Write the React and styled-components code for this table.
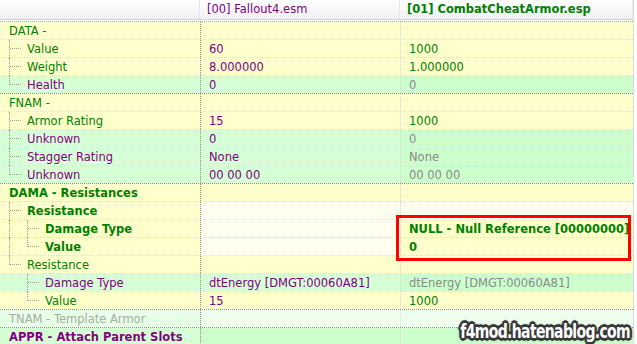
import React from 'react'
import styled, { createGlobalStyle } from 'styled-components'

const GlobalStyle = createGlobalStyle`
  body {
    margin: 0;
    background: #fff;
    font-family: "DejaVu Sans", Verdana, sans-serif;
  }
`

const G = '#008000'
const P = '#800080'
const GR = '#8a8a8a'
const LG = '#a7aca7'
const Y = '#ffffcc'
const Y2 = '#fffff0'
const GN = '#d6ffd6'
const GN2 = '#ccffcc'
const T1 = '#e6ffe6'
const T2 = '#eeffee'

const Frame = styled.div`
  position: relative;
  width: 637px;
  height: 344px;
  overflow: hidden;
  background: #fff;
`

const Table = styled.div`
  width: 633px;
  border-right: 1px solid #dcdcdc;
  font-size: 11.5px;
`

const Header = styled.div`
  display: grid;
  grid-template-columns: 200px 200px 1fr;
  height: 19px;
  border-bottom: 1px solid #d2d2d2;
  background: linear-gradient(#ffffff, #f0f0f2);
`

const HeadCell = styled.div`
  padding-left: ${({ $pad }) => $pad}px;
  line-height: 19px;
  color: ${({ $color }) => $color};
  font-weight: ${({ $bold }) => ($bold ? 700 : 400)};
  border-right: 1px solid #e6e6e6;
  white-space: nowrap;
`

const Body = styled.div`
  margin-top: 1px;
  border-top: 1px dotted #86b886;
`

const Row = styled.div`
  display: grid;
  grid-template-columns: 200px 200px 1fr;
  height: 18px;
  box-sizing: border-box;
  border-bottom: 1px dotted ${({ $end }) => ($end ? '#8c8c8c' : '#dcdcd0')};
`

const LabelCell = styled.div`
  display: flex;
  height: 17px;
  padding-left: 1px;
  background: ${({ $bg }) => $bg};
  color: ${({ $color }) => $color};
  font-weight: ${({ $bold }) => ($bold ? 700 : 400)};
  line-height: 19px;
  white-space: nowrap;
`

const Guide = styled.span`
  position: relative;
  flex: 0 0 18px;
  &::before {
    content: '';
    position: absolute;
    left: 8px;
    top: 0;
    bottom: ${({ $kind }) => ($kind === 'elbow' ? '8px' : '-1px')};
    border-left: 1px dotted #9a9a9a;
    display: ${({ $kind }) => ($kind === 'blank' ? 'none' : 'block')};
  }
  &::after {
    content: '';
    position: absolute;
    left: 9px;
    width: 11px;
    top: 8px;
    border-top: 1px dotted #9a9a9a;
    display: ${({ $kind }) => ($kind === 'tee' || $kind === 'elbow' ? 'block' : 'none')};
  }
`

const Label = styled.span`
  padding-left: 8px;
`

const ValueCell = styled.div`
  height: 17px;
  padding-left: 8px;
  background: ${({ $bg }) => $bg};
  color: ${({ $color }) => $color};
  font-weight: ${({ $bold }) => ($bold ? 700 : 400)};
  border-left: 1px dotted ${({ $dark }) => ($dark ? '#8c8c8c' : '#d8d8d8')};
  line-height: 19px;
  white-space: nowrap;
`

const Highlight = styled.div`
  position: absolute;
  left: 396px;
  top: 215px;
  width: 235px;
  height: 46px;
  box-sizing: border-box;
  border: 3px solid #ff0000;
  pointer-events: none;
`

const Watermark = styled.div`
  position: absolute;
  right: 7px;
  bottom: 2px;
  font-family: "DejaVu Sans Condensed", "DejaVu Sans", sans-serif;
  font-weight: 700;
  font-size: 19px;
  letter-spacing: -0.8px;
  color: #fff;
  transform: scaleX(0.82);
  transform-origin: right bottom;
  text-shadow:
    2px 0 0 #383838, -2px 0 0 #383838, 0 2px 0 #383838, 0 -2px 0 #383838,
    2px 2px 0 #383838, -2px -2px 0 #383838, 2px -2px 0 #383838, -2px 2px 0 #383838,
    3px 0 1px #383838, -3px 0 1px #383838, 0 3px 1px #383838, 0 -3px 1px #383838;
`

const rows = [
  { label: 'DATA -', lc: G, bg: [Y, Y, Y] },
  { label: 'Value', g: ['tee'], lc: G, mid: '60', mc: P, right: '1000', rc: G, bg: [Y, Y, Y] },
  { label: 'Weight', g: ['tee'], lc: G, mid: '8.000000', mc: P, right: '1.000000', rc: G, bg: [Y, Y, Y] },
  { label: 'Health', g: ['elbow'], lc: P, mid: '0', mc: P, right: '0', rc: GR, bg: [GN, GN, GN2], end: true },
  { label: 'FNAM -', lc: G, bg: [Y, Y, Y] },
  { label: 'Armor Rating', g: ['tee'], lc: G, mid: '15', mc: P, right: '1000', rc: G, bg: [Y, Y, Y] },
  { label: 'Unknown', g: ['tee'], lc: P, mid: '0', mc: P, right: '0', rc: GR, bg: [GN, GN, GN2] },
  { label: 'Stagger Rating', g: ['tee'], lc: P, mid: 'None', mc: P, right: 'None', rc: GR, bg: [GN, GN, GN2] },
  { label: 'Unknown', g: ['elbow'], lc: P, mid: '00 00 00', mc: P, right: '00 00 00', rc: GR, bg: [GN, GN, GN2], end: true },
  { label: 'DAMA - Resistances', lc: G, bold: true, bg: [Y, Y, Y] },
  { label: 'Resistance', g: ['tee'], lc: G, bold: true, bg: [Y, Y2, Y2] },
  { label: 'Damage Type', g: ['pipe', 'tee'], lc: G, bold: true, right: 'NULL - Null Reference [00000000]', rc: G, rbold: true, bg: [Y, Y2, Y] },
  { label: 'Value', g: ['pipe', 'elbow'], lc: G, bold: true, right: '0', rc: G, rbold: true, bg: [Y, Y2, Y] },
  { label: 'Resistance', g: ['elbow'], lc: G, bg: [Y, Y, Y] },
  { label: 'Damage Type', g: ['blank', 'tee'], lc: P, mid: 'dtEnergy [DMGT:00060A81]', mc: P, right: 'dtEnergy [DMGT:00060A81]', rc: GR, bg: [GN, GN, GN2] },
  { label: 'Value', g: ['blank', 'elbow'], lc: G, mid: '15', mc: P, right: '1000', rc: G, bg: [Y, Y, Y], end: true },
  { label: 'TNAM - Template Armor', lc: LG, bg: [T1, T2, T2], end: true },
  { label: 'APPR - Attach Parent Slots', lc: P, bold: true, bg: [GN, GN2, GN2] },
]

const App = () => {
  return (
    <Frame>
      <GlobalStyle />
      <Table>
        <Header>
          <HeadCell />
          <HeadCell $pad={7} $color={P}>[00] Fallout4.esm</HeadCell>
          <HeadCell $pad={7} $color={G} $bold>[01] CombatCheatArmor.esp</HeadCell>
        </Header>
        <Body>
          {rows.map((r, i) => (
            <Row key={i} $end={r.end}>
              <LabelCell $bg={r.bg[0]} $color={r.lc} $bold={r.bold}>
                {(r.g || []).map((k, j) => (
                  <Guide key={j} $kind={k} />
                ))}
                <Label>{r.label}</Label>
              </LabelCell>
              <ValueCell $bg={r.bg[1]} $color={r.mc} $dark>
                {r.mid}
              </ValueCell>
              <ValueCell $bg={r.bg[2]} $color={r.rc} $bold={r.rbold}>
                {r.right}
              </ValueCell>
            </Row>
          ))}
        </Body>
      </Table>
      <Highlight />
      <Watermark>f4mod.hatenablog.com</Watermark>
    </Frame>
  )
}

export default App
